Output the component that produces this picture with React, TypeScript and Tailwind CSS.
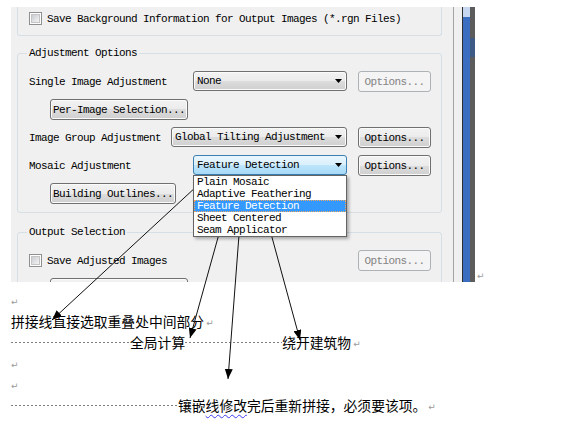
import type { ReactNode } from 'react';

const ui =
	"font-['Liberation_Mono',monospace] text-[11px] leading-[12px] tracking-[-0.6px] text-black";

const raised =
	'border-[#707070] bg-[linear-gradient(#f2f2f2,#ebebeb_50%,#dddddd_50%,#cfcfcf)] shadow-[inset_0_0_0_1px_#fbfbfb]';

function Button({
	label,
	className = '',
	disabled = false,
}: {
	label?: string;
	className?: string;
	disabled?: boolean;
}) {
	return (
		<div
			className={`flex h-[21px] shrink-0 items-center justify-center whitespace-nowrap rounded-[3px] border ${
				disabled ? 'border-[#adb2b5] bg-[#f4f4f4] text-[#838383]' : raised
			} ${className}`}
		>
			{label}
		</div>
	);
}

function Caret() {
	return (
		<svg width="7" height="4" viewBox="0 0 7 4" className="ml-auto shrink-0">
			<path d="M0 0h7L3.5 4z" fill="#000" />
		</svg>
	);
}

function Combo({
	value,
	className = '',
	active = false,
	children,
}: {
	value: string;
	className?: string;
	active?: boolean;
	children?: ReactNode;
}) {
	return (
		<div
			className={`relative flex h-[20px] shrink-0 items-center whitespace-nowrap rounded-[3px] border pl-[3px] pr-[4px] ${
				active
					? 'border-[#3c7fb1] bg-[linear-gradient(#eaf6fd,#d9f0fc_50%,#bee6fd_50%,#a7d9f5)]'
					: raised
			} ${className}`}
		>
			<span>{value}</span>
			<Caret />
			{children}
		</div>
	);
}

function Check() {
	return (
		<span className="flex h-[13px] w-[13px] shrink-0 items-center justify-center border border-[#8e8f8f] bg-white">
			<span className="h-[9px] w-[9px] border border-[#c4c4c4] bg-[linear-gradient(135deg,#c9ccd1,#f4f4f4)]" />
		</span>
	);
}

function Group({
	title,
	className = '',
	children,
}: {
	title: string;
	className?: string;
	children: ReactNode;
}) {
	return (
		<fieldset
			className={`shrink-0 rounded-[3px] border border-[#d5dfe5] pl-[11px] pr-[10px] pt-[12px] ${className}`}
		>
			<legend className="-ml-[2px] px-[2px] leading-[12px]">{title}</legend>
			{children}
		</fieldset>
	);
}

const mosaicModes = [
	'Plain Mosaic',
	'Adaptive Feathering',
	'Feature Detection',
	'Sheet Centered',
	'Seam Applicator',
];

function Pilcrow({ className = '' }: { className?: string }) {
	return (
		<span
			className={`font-['DejaVu_Sans',sans-serif] text-[9px] leading-[10px] text-[#9b9b9b] ${className}`}
		>
			↵
		</span>
	);
}

function Leader({ className }: { className: string }) {
	return (
		<span
			className={`h-px shrink-0 bg-[repeating-linear-gradient(90deg,#808080_0_2px,transparent_2px_4px)] ${className}`}
		/>
	);
}

export default function App() {
	return (
		<div className="relative h-[425px] w-[576px] overflow-hidden bg-white">
			{/* screenshot pasted inline in the document */}
			<div className="flex items-end pl-[11px] pt-[7px]">
				<div className={`flex h-[275px] w-[464px] shrink-0 overflow-hidden bg-[#f0f0f0] ${ui}`}>
					<div className="flex w-[442px] shrink-0 flex-col pl-[6px] pr-[11px]">
						<div className="h-[29px] shrink-0 rounded-b-[3px] border border-t-0 border-[#d5dfe5] pl-[11px] pt-[5px]">
							<div className="flex h-[13px] items-center gap-[5px] whitespace-nowrap">
								<Check />
								<span>Save Background Information for Output Images (*.rgn Files)</span>
							</div>
						</div>

						<Group title="Adjustment Options" className="mt-[11px] pb-[8px]">
							<div className="flex flex-col gap-[7px]">
								<div className="flex h-[21px] items-start">
									<span className="flex-1 self-center whitespace-nowrap">Single Image Adjustment</span>
									<Combo value="None" className="w-[154px]" />
									<Button label="Options..." disabled className="ml-[11px] w-[73px]" />
								</div>
								<div className="flex h-[21px] pl-[21px]">
									<Button label="Per-Image Selection..." className="w-[138px]" />
								</div>
								<div className="flex h-[21px] items-start">
									<span className="flex-1 self-center whitespace-nowrap">Image Group Adjustment</span>
									<Combo value="Global Tilting Adjustment" className="w-[176px]" />
									<Button label="Options..." className="ml-[11px] w-[73px]" />
								</div>
								<div className="flex h-[21px] items-start">
									<span className="flex-1 self-center whitespace-nowrap">Mosaic Adjustment</span>
									<Combo value="Feature Detection" active className="w-[154px]">
										<div className="absolute left-[-1px] top-[19px] z-10 w-[154px] border border-[#646464] bg-white shadow-[2px_2px_3px_rgba(0,0,0,0.3)]">
											{mosaicModes.map(mode => (
												<div
													key={mode}
													className={`h-[12px] pl-[3px] leading-[12px] ${
														mode === 'Feature Detection'
															? 'bg-[#3399ff] text-white outline-1 outline-dotted outline-[#f0a860] -outline-offset-1'
															: ''
													}`}
												>
													{mode}
												</div>
											))}
										</div>
									</Combo>
									<Button label="Options..." className="ml-[11px] w-[73px]" />
								</div>
								<div className="flex h-[21px] pl-[21px]">
									<Button label="Building Outlines..." className="w-[126px]" />
								</div>
							</div>
						</Group>

						<Group title="Output Selection" className="mt-[13px] pb-[8px]">
							<div className="flex flex-col gap-[7px]">
								<div className="flex h-[21px] items-center">
									<Check />
									<span className="ml-[5px] flex-1 whitespace-nowrap">Save Adjusted Images</span>
									<Button label="Options..." disabled className="ml-[11px] w-[73px]" />
								</div>
								<div className="flex h-[21px] pl-[21px]">
									<Button className="w-[138px]" />
								</div>
							</div>
						</Group>
					</div>

					{/* window edge and the neighbouring window's scroll strip */}
					<div className="w-px shrink-0 bg-[#a3a3a3]" />
					<div className="w-[8px] shrink-0" />
					<div className="w-px shrink-0 bg-[#2f2f2f]" />
					<div className="flex w-[7px] shrink-0 flex-col bg-[#3b6dc1]">
						<div className="h-[10px] bg-[#c5d6ee]" />
					</div>
					<div className="flex w-[5px] shrink-0 flex-col bg-[#5c5c5c]">
						<div className="mt-[31px] h-[19px] bg-[#3e5b86]" />
					</div>
				</div>
				<Pilcrow className="mb-[1px] ml-[2px]" />
			</div>

			{/* document paragraphs */}
			<div className="mt-[8px] pl-[11px] font-['Noto_Sans_CJK_SC',sans-serif] text-[13.8px] leading-[21px] text-black">
				<div className="flex h-[21px] items-center">
					<Pilcrow className="mt-[2px]" />
				</div>
				<div className="flex h-[21px] items-center whitespace-nowrap">
					拼接线直接选取重叠处中间部分
					<Pilcrow className="ml-[2px] mt-[2px]" />
				</div>
				<div className="flex h-[21px] items-center whitespace-nowrap">
					<Leader className="w-[119px]" />
					全局计算
					<Leader className="w-[97px]" />
					绕开建筑物
					<Pilcrow className="ml-[2px] mt-[2px]" />
				</div>
				<div className="flex h-[21px] items-center">
					<Pilcrow className="mt-[2px]" />
				</div>
				<div className="flex h-[21px] items-center">
					<Pilcrow className="mt-[2px]" />
				</div>
				<div className="flex h-[21px] items-center whitespace-nowrap">
					<Leader className="w-[167px]" />
					镶嵌
					<span className="underline decoration-wavy decoration-[#3d3df0] decoration-1 underline-offset-[3px]">
						线修改
					</span>
					完后重新拼接，必须要该项。
					<Pilcrow className="ml-[2px] mt-[2px]" />
				</div>
				<div className="flex h-[21px] items-center">
					<Pilcrow className="mt-[2px]" />
				</div>
			</div>

			{/* callout arrows */}
			<svg
				className="pointer-events-none absolute left-0 top-0"
				width="576"
				height="425"
				viewBox="0 0 576 425"
			>
				<defs>
					<marker
						id="tip"
						markerWidth="10"
						markerHeight="8"
						refX="10"
						refY="4"
						orient="auto"
						markerUnits="userSpaceOnUse"
					>
						<path d="M0 0L10 4L0 8z" fill="#000" />
					</marker>
				</defs>
				<g stroke="#111" strokeWidth="1" fill="none" markerEnd="url(#tip)">
					<line x1="197" y1="186" x2="52" y2="320" />
					<line x1="229" y1="198" x2="190" y2="338" />
					<line x1="239" y1="235" x2="228" y2="379" />
					<line x1="267" y1="219" x2="300" y2="340" />
				</g>
			</svg>
		</div>
	);
}
